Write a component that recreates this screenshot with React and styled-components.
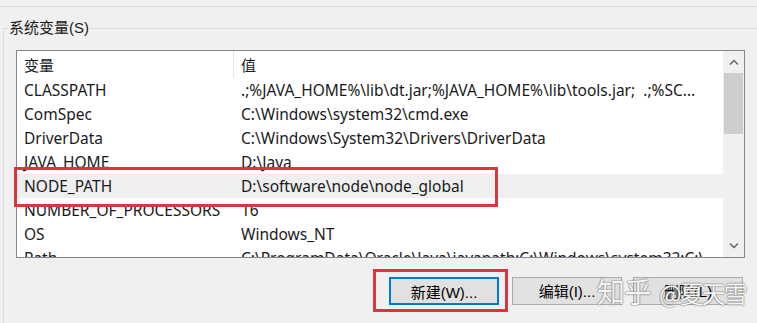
import React from "react";
import styled, { createGlobalStyle } from "styled-components";

const Global = createGlobalStyle`
  html, body { margin: 0; padding: 0; background: #f0f0f0; }
  body { font-family: "Noto Sans", "Noto Sans CJK SC", sans-serif; }
`;

const Page = styled.div`
  position: relative;
  width: 757px;
  height: 323px;
  overflow: hidden;
  background: #f0f0f0;
  display: flex;
  flex-direction: column;
  color: #000;
`;

const TopRule = styled.div`
  margin-top: 6px;
  height: 1px;
  background: #dcdcdc;
`;

const Group = styled.section`
  position: relative;
  margin: 21px 0 0 3px;
  border-top: 1px solid #dcdcdc;
  border-left: 1px solid #dcdcdc;
  padding: 21px 0 0 12px;
  flex: 1;
  display: flex;
  flex-direction: column;
`;

const Legend = styled.div`
  position: absolute;
  top: -11px;
  left: 4px;
  padding: 0 1px;
  background: #f0f0f0;
  font-family: "Liberation Sans", "Noto Sans CJK SC", sans-serif;
  font-size: 15px;
  line-height: 20px;
  color: #1a1a1a;
`;

const ListBox = styled.div`
  width: 727px;
  height: 206px;
  border: 1px solid #828790;
  background: #fff;
  display: grid;
  grid-template-columns: 1fr 21px;
  overflow: hidden;
`;

const Table = styled.div`
  display: flex;
  flex-direction: column;
  overflow: hidden;
`;

const Row = styled.div`
  display: grid;
  grid-template-columns: 217px 1fr;
  height: ${(p) => (p.$header ? 27 : 24)}px;
  flex: none;
  align-items: center;
  background: ${(p) => (p.$selected ? "#efefef" : "transparent")};
  font-family: "Noto Sans", "Noto Sans CJK SC", sans-serif;
  font-size: 15.5px;
  color: #1a1a1a;
`;

const Cell = styled.div`
  padding-left: 7px;
  white-space: pre;
  overflow: hidden;
  height: 100%;
  display: flex;
  align-items: center;
  border-right: ${(p) => (p.$divider ? "1px solid #e5e5e5" : "none")};
  font-family: ${(p) =>
    p.$cjk ? '"Noto Sans CJK SC", sans-serif' : "inherit"};
  font-size: ${(p) => (p.$cjk ? "15px" : "inherit")};
`;

const ScrollBar = styled.div`
  background: #f0f0f0;
  display: flex;
  flex-direction: column;
`;

const Arrow = styled.div`
  height: 22px;
  display: flex;
  align-items: center;
  justify-content: center;
  flex: none;
`;

const Track = styled.div`
  flex: 1;
  display: flex;
  flex-direction: column;
`;

const Thumb = styled.div`
  height: 61px;
  background: #cdcdcd;
  margin: 0 1px;
`;

const ButtonRow = styled.div`
  width: 727px;
  margin-top: 11px;
  display: flex;
  justify-content: flex-end;
  align-items: center;
  gap: 11px;
`;

const Mark = styled.div`
  border: 3px solid #d9373d;
  padding: 5px 6px 4px 13px;
  margin-right: -7px;
  display: flex;
`;

const Button = styled.button`
  width: 110px;
  height: 28px;
  background: #e1e1e1;
  border: 1px solid ${(p) => (p.$default ? "#0078d7" : "#adadad")};
  box-shadow: ${(p) => (p.$default ? "inset 0 0 0 1px #0078d7" : "none")};
  font-family: "Liberation Sans", "Noto Sans CJK SC", sans-serif;
  font-size: 15px;
  color: #000;
  padding: 0;
`;

const RowMark = styled.div`
  position: absolute;
  left: 10px;
  top: 138px;
  width: 478px;
  height: 34px;
  border: 3px solid #d9373d;
`;

const Watermark = styled.div`
  position: absolute;
  left: 597px;
  top: 275px;
  display: flex;
  align-items: baseline;
  gap: 8px;
  font-family: "Noto Sans CJK SC", sans-serif;
  line-height: 32px;
  color: rgba(255, 255, 255, 0.95);
  text-shadow: 0 0 1px rgba(70, 70, 70, 0.9), 0 0 2px rgba(100, 100, 100, 0.7);
  white-space: pre;
`;

const Brand = styled.span`
  font-size: 28px;
  letter-spacing: -1px;
`;

const Handle = styled.span`
  font-size: 24px;
  letter-spacing: -2px;
`;

const rows = [
  ["CLASSPATH", ".;%JAVA_HOME%\\lib\\dt.jar;%JAVA_HOME%\\lib\\tools.jar;  .;%SC..."],
  ["ComSpec", "C:\\Windows\\system32\\cmd.exe"],
  ["DriverData", "C:\\Windows\\System32\\Drivers\\DriverData"],
  ["JAVA_HOME", "D:\\Java"],
  ["NODE_PATH", "D:\\software\\node\\node_global"],
  ["NUMBER_OF_PROCESSORS", "16"],
  ["OS", "Windows_NT"],
  ["Path", "C:\\ProgramData\\Oracle\\Java\\javapath;C:\\Windows\\system32;C:\\..."],
];

const Chevron = ({ up }) => (
  <svg width="10" height="6" viewBox="0 0 10 6">
    <path
      d={up ? "M1 5.5 L5 1.5 L9 5.5" : "M1 0.5 L5 4.5 L9 0.5"}
      fill="none"
      stroke="#606060"
      strokeWidth="1.4"
    />
  </svg>
);

export default function App() {
  return (
    <>
      <Global />
      <Page>
        <TopRule />
        <Group>
          <Legend>系统变量(S)</Legend>
          <ListBox>
            <Table>
              <Row $header>
                <Cell $divider $cjk>变量</Cell>
                <Cell $cjk>值</Cell>
              </Row>
              {rows.map(([k, v]) => (
                <Row key={k} $selected={k === "NODE_PATH"}>
                  <Cell>{k}</Cell>
                  <Cell>{v}</Cell>
                </Row>
              ))}
            </Table>
            <ScrollBar>
              <Arrow>
                <Chevron up />
              </Arrow>
              <Track>
                <Thumb />
              </Track>
              <Arrow>
                <Chevron />
              </Arrow>
            </ScrollBar>
          </ListBox>
          <ButtonRow>
            <Mark>
              <Button $default>新建(W)...</Button>
            </Mark>
            <Button>编辑(I)...</Button>
            <Button>删除(L)</Button>
          </ButtonRow>
          <RowMark />
        </Group>
        <Watermark>
          <Brand>知乎</Brand>
          <Handle>@夏天雪</Handle>
        </Watermark>
      </Page>
    </>
  );
}
